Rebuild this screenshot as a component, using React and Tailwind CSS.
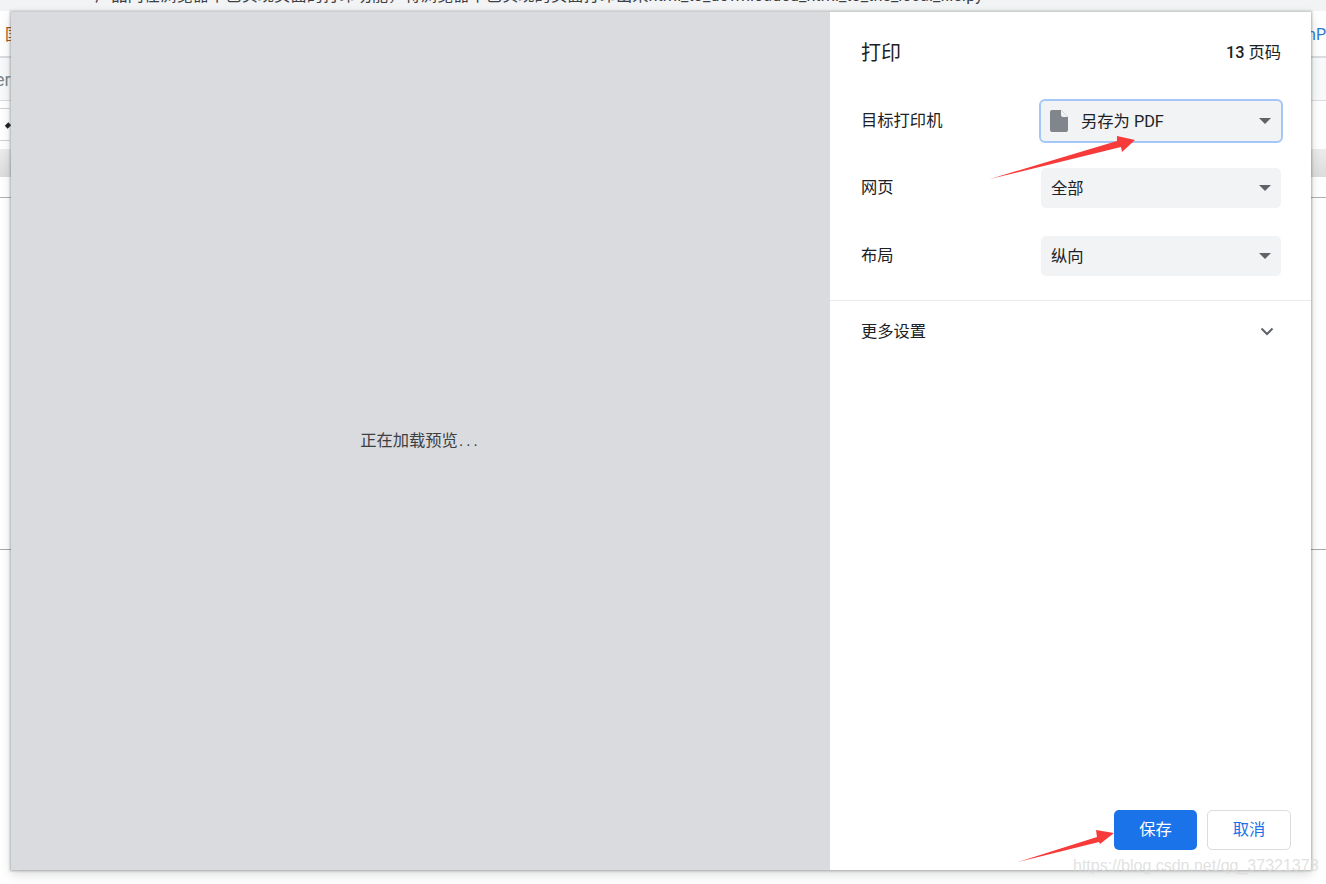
import React from "react";

const font = "font-['Roboto','Noto_Sans_CJK_SC','Liberation_Sans',sans-serif]";

function Caret() {
  return (
    <svg width="12" height="6" viewBox="0 0 12 6" className="shrink-0">
      <path d="M0 0h12L6 6z" fill="#5f6368" />
    </svg>
  );
}

function Field({ label, value, focused, icon, rowClass }) {
  return (
    <div className={`flex items-center justify-between pl-[31px] pr-[30px] ${rowClass}`}>
      <span className="text-[16.3px] leading-5 text-[#202124]">{label}</span>
      <div
        className={
          focused
            ? "flex h-[44px] w-[244px] -mr-[2px] items-center rounded-[6px] border-2 border-[#a4c7f7] bg-[#f1f3f4] pl-[9px] pr-[10px]"
            : "flex h-10 w-[240px] items-center rounded-[5px] bg-[#f1f3f4] pl-[10px] pr-[10px]"
        }
      >
        {icon}
        <span className="flex-1 pt-[1px] text-[16.3px] leading-5 text-[#202124]">{value}</span>
        <Caret />
      </div>
    </div>
  );
}

function PageBehind() {
  return (
    <div className="flex h-[884px] flex-col overflow-hidden bg-white text-[#5f6368]">
      <div className="h-[11px] shrink-0 overflow-hidden bg-[#f1f3f4] pl-[95px]">
        <p className="-mt-[14px] whitespace-nowrap text-[16.3px] leading-5 text-[#3c4043]">
          产品内在浏览器中已实现页面的打印功能，将浏览器中已实现的页面打印出来html_to_downloaded_html_to_the_local_file.py
        </p>
      </div>
      <div className="flex h-[47px] shrink-0 items-center justify-between border-b-2 border-[#dadce0] pt-[2px] text-[16px] leading-5">
        <span className="pl-[5px] text-[#a5521f]">国</span>
        <span className="text-[#2a7bd1]">nP</span>
      </div>
      <div className="flex h-[43px] shrink-0 items-center border-b border-[#dadce0] bg-[#f8f9fa] pt-[2px] text-[18px] leading-5">
        <span className="-ml-[11px] text-[#80868b]">ter</span>
      </div>
      <div className="h-2 w-[10px] shrink-0 border-b border-[#d0d0d0]" />
      <div className="flex h-[32px] w-[10px] shrink-0 items-center border-b border-[#d0d0d0] pl-[6px] pt-[2px]">
        <span className="h-[5px] w-[5px] rotate-45 bg-[#202124]" />
      </div>
      <div className="h-2 shrink-0" />
      <div className="h-[28px] shrink-0 bg-gradient-to-b from-[#ececec] to-[#dcdcdc]" />
      <div className="h-[21px] shrink-0 border-b border-[#b0b0b0]" />
      <div className="h-[352px] shrink-0 border-b border-[#a8a8a8]" />
    </div>
  );
}

export default function App() {
  return (
    <div className={`relative h-[884px] w-[1326px] overflow-hidden ${font}`}>
      <PageBehind />

      {/* print dialog */}
      <div className="absolute left-[11px] top-[12px] flex h-[858px] w-[1300px] bg-white shadow-[0_0_2px_1px_rgba(60,64,67,0.35),0_4px_10px_rgba(60,64,67,0.2)]">
        <div className="flex w-[819px] shrink-0 items-center justify-center bg-[#dadbdf]">
          <span className="text-[16.3px] leading-5 text-[#3c4043]">
            正在加载预览<span className="ml-[1px] tracking-[3px]">...</span>
          </span>
        </div>

        <div className="flex flex-1 flex-col">
          <div className="flex items-center justify-between pl-[31px] pr-[30px] pt-[29px]">
            <h1 className="text-[20px] font-normal leading-6 text-[#202124]">打印</h1>
            <span className="text-[16.3px] leading-5 text-[#202124]">
              <b className="font-medium">13</b> 页码
            </span>
          </div>

          <Field
            rowClass="mt-[34px]"
            label="目标打印机"
            value="另存为 PDF"
            focused
            icon={
              <svg width="18" height="22" viewBox="0 0 18 22" className="mr-[13px] shrink-0">
                <path
                  d="M2 0h9l7 7v13a2 2 0 0 1-2 2H2a2 2 0 0 1-2-2V2a2 2 0 0 1 2-2z"
                  fill="#80868b"
                />
                <path d="M11 0v5a2 2 0 0 0 2 2h5z" fill="#f1f3f4" />
              </svg>
            }
          />
          <Field rowClass="mt-[25px]" label="网页" value="全部" />
          <Field rowClass="mt-[28px]" label="布局" value="纵向" />

          <div className="mt-6 flex h-[61px] items-center justify-between border-t border-[#e8eaed] pl-[31px] pr-[37px]">
            <span className="pt-[1px] text-[16.3px] leading-5 text-[#202124]">更多设置</span>
            <svg width="14" height="9" viewBox="0 0 14 9">
              <path d="M1.5 1.5 7 7l5.5-5.5" fill="none" stroke="#5f6368" strokeWidth="2" />
            </svg>
          </div>

          <div className="mt-auto flex justify-end gap-[10px] pb-5 pr-5">
            <button className="h-10 w-[83px] rounded-[5px] bg-[#1a73e8] text-[16.3px] font-normal text-white">
              保存
            </button>
            <button className="h-10 w-[84px] rounded-[5px] border border-[#dadce0] bg-white text-[16.3px] font-normal text-[#1a73e8]">
              取消
            </button>
          </div>
        </div>
      </div>

      {/* screenshot annotations */}
      <svg className="absolute left-0 top-0 pointer-events-none" width="1326" height="884">
        <path d="M990 179 1117 141 1117 136 1135 140 1122 152 1121 147z" fill="#f73a3a" />
        <path d="M1018 862 1097 837 1096 830 1114 833 1100 844 1099 842z" fill="#f73a3a" />
      </svg>

      {/* blog watermark */}
      <span className="absolute left-[1073px] top-[856px] whitespace-nowrap font-['Liberation_Sans',sans-serif] text-[16px] leading-5 text-[#d9d9d9]/80">
        https://blog.csdn.net/qq_37321378
      </span>
    </div>
  );
}
